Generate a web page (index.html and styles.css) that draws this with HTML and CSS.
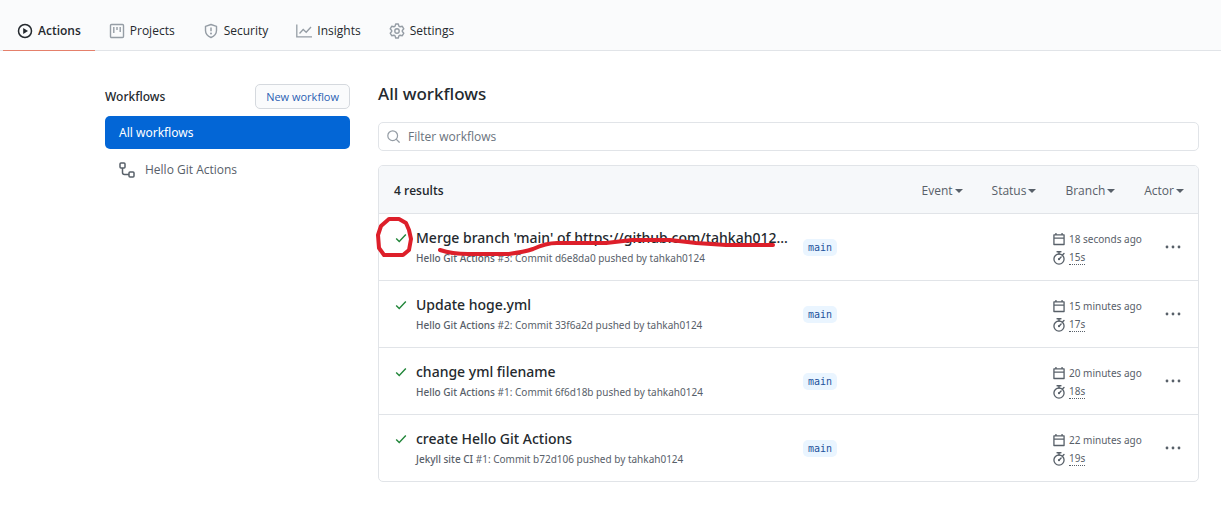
FILE: index.html
```
<!DOCTYPE html>
<html lang="en">
<head>
    <meta charset="utf-8">
    <title>Actions</title>
    <link rel="stylesheet" href="styles.css">
</head>
<body>
    <!-- Shared icons -->
    <svg class="icon-defs" aria-hidden="true">
        <symbol id="icon-check" viewBox="0 0 16 16">
            <path d="M2.5 8.5l3.5 3.5 7.5-8" fill="none" stroke="currentColor" stroke-width="1.6"/>
        </symbol>
        <symbol id="icon-calendar" viewBox="0 0 16 16">
            <path d="M4.5 1v3M11.5 1v3M2.2 3.2h11.6v11.1H2.2zM2.2 7h11.6" fill="none" stroke="currentColor" stroke-width="1.5" stroke-linejoin="round"/>
        </symbol>
        <symbol id="icon-stopwatch" viewBox="0 0 16 16">
            <path d="M5.8.8h4.4M8 1v2.5M12.3 4.2l1.4-1.4M8 9.5l2.4-2.6" fill="none" stroke="currentColor" stroke-width="1.6" stroke-linecap="round"/>
            <circle cx="8" cy="9.2" r="5.8" fill="none" stroke="currentColor" stroke-width="1.5"/>
            <circle cx="8" cy="9.3" r="1.2" fill="currentColor"/>
        </symbol>
        <symbol id="icon-kebab" viewBox="0 0 16 16">
            <circle cx="2" cy="8" r="1.4"/><circle cx="8" cy="8" r="1.4"/><circle cx="14" cy="8" r="1.4"/>
        </symbol>
    </svg>

    <nav class="tabs" aria-label="Repository">
        <a class="tab tab-active" href="#actions">
            <svg class="icon" viewBox="0 0 16 16"><circle cx="8" cy="8" r="6.5" fill="none" stroke="currentColor" stroke-width="1.5"/><path d="M6.2 5v6L11 8z" fill="currentColor"/></svg>
            Actions
        </a>
        <a class="tab" href="#projects">
            <svg class="icon" viewBox="0 0 16 16"><rect x="1.5" y="1.5" width="13" height="13" rx="1" fill="none" stroke="currentColor" stroke-width="1.4"/><path d="M4.8 4v6M8 4v3M11.2 4v5" fill="none" stroke="currentColor" stroke-width="1.4"/></svg>
            Projects
        </a>
        <a class="tab" href="#security">
            <svg class="icon" viewBox="0 0 16 16"><path d="M8 1.5l5.5 1.8v4.2c0 3.3-2 5.5-5.5 7-3.5-1.5-5.5-3.7-5.5-7V3.3z" fill="none" stroke="currentColor" stroke-width="1.4" stroke-linejoin="round"/><path d="M8 4.5v3.8" stroke="currentColor" stroke-width="1.5"/><circle cx="8" cy="10.5" r="1" fill="currentColor"/></svg>
            Security
        </a>
        <a class="tab" href="#insights">
            <svg class="icon" viewBox="0 0 16 16"><path d="M.8 1.5v12.3H16M3.5 10.5l3.7-4 3 2.8L15 4" fill="none" stroke="currentColor" stroke-width="1.3"/></svg>
            Insights
        </a>
        <a class="tab" href="#settings">
            <svg class="icon" viewBox="0 0 16 16"><path d="M6.7 1h2.6l.6 2.1 1.2.7 2.2-.5 1.5 2.5L13.3 7.4v1.2l1.5 1.6-1.5 2.5-2.2-.5-1.2.7-.6 2.1H6.7l-.6-2.1-1.2-.7-2.2.5-1.5-2.5 1.5-1.6V7.4L1.2 5.8l1.5-2.5 2.2.5 1.2-.7z" fill="none" stroke="currentColor" stroke-width="1.4" stroke-linejoin="round"/><circle cx="8" cy="8" r="2.2" fill="none" stroke="currentColor" stroke-width="1.4"/></svg>
            Settings
        </a>
    </nav>

    <div class="layout">
        <aside class="sidebar">
            <div class="sidebar-header">
                <h2 class="sidebar-title">Workflows</h2>
                <button class="new-button" type="button">New workflow</button>
            </div>
            <a class="side-link side-link-active" href="#all">All workflows</a>
            <a class="side-link" href="#hello">
                <svg class="icon" viewBox="0 0 16 16"><rect x="1" y="1" width="5" height="5" rx="1" fill="none" stroke="currentColor" stroke-width="1.5"/><rect x="10" y="10" width="5" height="5" rx="1" fill="none" stroke="currentColor" stroke-width="1.5"/><path d="M3.5 6v4.5q0 2 2 2H10" fill="none" stroke="currentColor" stroke-width="1.5"/></svg>
                Hello Git Actions
            </a>
        </aside>

        <main class="content">
            <h1 class="page-title">All workflows</h1>
            <label class="filter">
                <svg class="filter-icon" viewBox="0 0 16 16" aria-hidden="true"><circle cx="7" cy="7" r="6" fill="none" stroke="currentColor" stroke-width="1.5"/><path d="M11.2 11.2l4.3 4.3" stroke="currentColor" stroke-width="1.6"/></svg>
                <input class="filter-input" type="text" placeholder="Filter workflows" aria-label="Filter workflows">
            </label>

            <section class="runs">
                <header class="runs-header">
                    <strong class="runs-count">4 results</strong>
                    <button class="menu-button" type="button">Event</button>
                    <button class="menu-button" type="button">Status</button>
                    <button class="menu-button" type="button">Branch</button>
                    <button class="menu-button" type="button">Actor</button>
                </header>

                <article class="run">
                    <svg class="run-check"><use href="#icon-check"/></svg>
                    <div class="run-text">
                        <a class="run-title" href="#run3">Merge branch 'main' of https://github.com/tahkah012...</a>
                        <p class="run-info"><b>Hello Git Actions</b> #3: Commit d6e8da0 pushed by tahkah0124</p>
                    </div>
                    <a class="branch" href="#main">main</a>
                    <div class="run-meta">
                        <div class="meta-line"><svg class="meta-icon"><use href="#icon-calendar"/></svg>18 seconds ago</div>
                        <div class="meta-line"><svg class="meta-icon"><use href="#icon-stopwatch"/></svg><a class="duration" href="#run3">15s</a></div>
                    </div>
                    <button class="kebab" type="button" aria-label="Show options"><svg class="icon"><use href="#icon-kebab"/></svg></button>
                    <!-- Red pen marks -->
                    <svg class="marks" viewBox="0 0 406 46" aria-hidden="true">
                        <path d="M13 5L23 5L30 9L33 16L35 25L33 36L27 41L8 41L3 34L2 21L5 12L13 5"/>
                        <path d="M64 36Q76 40 92 40H133Q148 38 157 35Q170 29 181 29H230L256 26H294L320 29L350 31H397"/>
                    </svg>
                </article>

                <article class="run">
                    <svg class="run-check"><use href="#icon-check"/></svg>
                    <div class="run-text">
                        <a class="run-title" href="#run2">Update hoge.yml</a>
                        <p class="run-info"><b>Hello Git Actions</b> #2: Commit 33f6a2d pushed by tahkah0124</p>
                    </div>
                    <a class="branch" href="#main">main</a>
                    <div class="run-meta">
                        <div class="meta-line"><svg class="meta-icon"><use href="#icon-calendar"/></svg>15 minutes ago</div>
                        <div class="meta-line"><svg class="meta-icon"><use href="#icon-stopwatch"/></svg><a class="duration" href="#run2">17s</a></div>
                    </div>
                    <button class="kebab" type="button" aria-label="Show options"><svg class="icon"><use href="#icon-kebab"/></svg></button>
                </article>

                <article class="run">
                    <svg class="run-check"><use href="#icon-check"/></svg>
                    <div class="run-text">
                        <a class="run-title" href="#run1">change yml filename</a>
                        <p class="run-info"><b>Hello Git Actions</b> #1: Commit 6f6d18b pushed by tahkah0124</p>
                    </div>
                    <a class="branch" href="#main">main</a>
                    <div class="run-meta">
                        <div class="meta-line"><svg class="meta-icon"><use href="#icon-calendar"/></svg>20 minutes ago</div>
                        <div class="meta-line"><svg class="meta-icon"><use href="#icon-stopwatch"/></svg><a class="duration" href="#run1">18s</a></div>
                    </div>
                    <button class="kebab" type="button" aria-label="Show options"><svg class="icon"><use href="#icon-kebab"/></svg></button>
                </article>

                <article class="run">
                    <svg class="run-check"><use href="#icon-check"/></svg>
                    <div class="run-text">
                        <a class="run-title" href="#jekyll1">create Hello Git Actions</a>
                        <p class="run-info"><b>Jekyll site CI</b> #1: Commit b72d106 pushed by tahkah0124</p>
                    </div>
                    <a class="branch" href="#main">main</a>
                    <div class="run-meta">
                        <div class="meta-line"><svg class="meta-icon"><use href="#icon-calendar"/></svg>22 minutes ago</div>
                        <div class="meta-line"><svg class="meta-icon"><use href="#icon-stopwatch"/></svg><a class="duration" href="#jekyll1">19s</a></div>
                    </div>
                    <button class="kebab" type="button" aria-label="Show options"><svg class="icon"><use href="#icon-kebab"/></svg></button>
                </article>
            </section>
        </main>
    </div>
</body>
</html>
```
FILE: styles.css
```
* {
    box-sizing: border-box;
}
body {
    margin: 0;
    background: #fff;
    color: #24292e;
    font-family: "Open Sans", "Noto Sans", sans-serif;
    font-size: 12px;
    line-height: 18px;
}
a {
    color: inherit;
    text-decoration: none;
}
button {
    font: inherit;
    cursor: pointer;
}
.icon-defs {
    display: none;
}
.icon {
    width: 16px;
    height: 16px;
    flex: none;
}

/* Top navigation */
.tabs {
    display: flex;
    padding: 12px 3px 0;
    background: #fafbfc;
    border-bottom: 1px solid #e1e4e8;
}
.tab {
    display: flex;
    align-items: center;
    gap: 5px;
    height: 39px;
    margin-bottom: -1px;
    padding: 0 14px;
    border-bottom: 1px solid transparent;
}
.tab .icon {
    color: #959da5;
}
.tab-active {
    font-weight: 600;
    border-bottom-color: #e5806b;
}
.tab-active .icon {
    color: #24292e;
}

.layout {
    display: grid;
    grid-template-columns: 245px minmax(0, 1fr);
    gap: 28px;
    padding: 32px 22px 37px 105px;
}

/* Sidebar */
.sidebar-header {
    display: flex;
    align-items: center;
    justify-content: space-between;
    margin: 1px 0 7px;
}
.sidebar-title {
    margin: 0;
    font-family: "Noto Sans", sans-serif;
    font-size: 12px;
    font-weight: 500;
}
.new-button {
    height: 25px;
    padding: 0 10px;
    background: #fafbfc;
    border: 1px solid #d5d9de;
    border-radius: 5px;
    color: #2c5fb3;
    font-size: 11px;
}
.side-link {
    display: flex;
    align-items: center;
    gap: 10px;
    height: 33px;
    margin-bottom: 4px;
    padding: 0 14px;
    border-radius: 5px;
    color: #586069;
}
.side-link-active {
    background: #0366d6;
    color: #fff;
    font-family: "Noto Sans", sans-serif;
}

/* Main column */
.page-title {
    margin: 0 0 17px;
    font-family: "Noto Sans", sans-serif;
    font-size: 17px;
    font-weight: 500;
    line-height: 22px;
}
.filter {
    display: flex;
    align-items: center;
    gap: 8px;
    height: 29px;
    margin-bottom: 14px;
    padding: 0 8px;
    border: 1px solid #e1e4e8;
    border-radius: 5px;
}
.filter-icon {
    width: 13px;
    height: 13px;
    color: #959da5;
}
.filter-input {
    flex: 1;
    padding: 0;
    border: 0;
    outline: 0;
    background: none;
    font: inherit;
}
.filter-input::placeholder {
    color: #6a737d;
}

/* Run list */
.runs {
    border: 1px solid #e1e4e8;
    border-radius: 5px;
}
.runs-header {
    display: flex;
    align-items: center;
    gap: 29px;
    height: 47px;
    padding: 2px 14px 0 15px;
    background: #f6f8fa;
    border-radius: 4px 4px 0 0;
}
.runs-count {
    flex: 1;
    font-weight: 600;
}
.menu-button {
    display: flex;
    align-items: center;
    gap: 2px;
    padding: 0;
    border: 0;
    background: none;
    color: #586069;
}
.menu-button::after {
    content: "";
    border: 4px solid transparent;
    border-top-color: currentColor;
    border-bottom: 0;
}
.run {
    position: relative;
    display: grid;
    grid-template-columns: 22px minmax(0, 1fr) 249px 113px 16px;
    align-items: center;
    height: 67px;
    padding: 0 17px 0 15px;
    border-top: 1px solid #e1e4e8;
}
.run-check {
    align-self: start;
    width: 14px;
    height: 14px;
    margin-top: 17px;
    color: #22863a;
}
.run-text {
    align-self: start;
    padding-top: 14px;
    font-family: "Noto Sans", sans-serif;
    white-space: nowrap;
}
.run-title {
    display: block;
    font-size: 14px;
    font-weight: 500;
    line-height: 20px;
}
.run-info {
    margin: 2px 0 0;
    color: #586069;
    font-size: 10px;
    line-height: 16px;
}
.run-info b {
    font-weight: 500;
}
.branch {
    justify-self: start;
    padding: 0 5px;
    background: #eaf5ff;
    border-radius: 5px;
    color: #22519c;
    font-family: "DejaVu Sans Mono", monospace;
    font-size: 10px;
    line-height: 17px;
}
.run-meta {
    padding-top: 2px;
    color: #586069;
    font-family: "Noto Sans", sans-serif;
    font-size: 10px;
}
.meta-line {
    display: flex;
    align-items: center;
    gap: 3px;
    height: 19px;
    white-space: nowrap;
}
.meta-icon {
    width: 14px;
    height: 14px;
}
.duration {
    line-height: 14px;
    border-bottom: 1px dotted #586069;
}
.kebab {
    display: flex;
    padding: 0;
    border: 0;
    background: none;
    fill: #586069;
}
.marks {
    position: absolute;
    top: 0;
    left: -3px;
    width: 406px;
    height: 46px;
    fill: none;
    stroke: #dd1f2a;
    stroke-width: 4;
    stroke-linecap: round;
    stroke-linejoin: round;
    pointer-events: none;
}
```
